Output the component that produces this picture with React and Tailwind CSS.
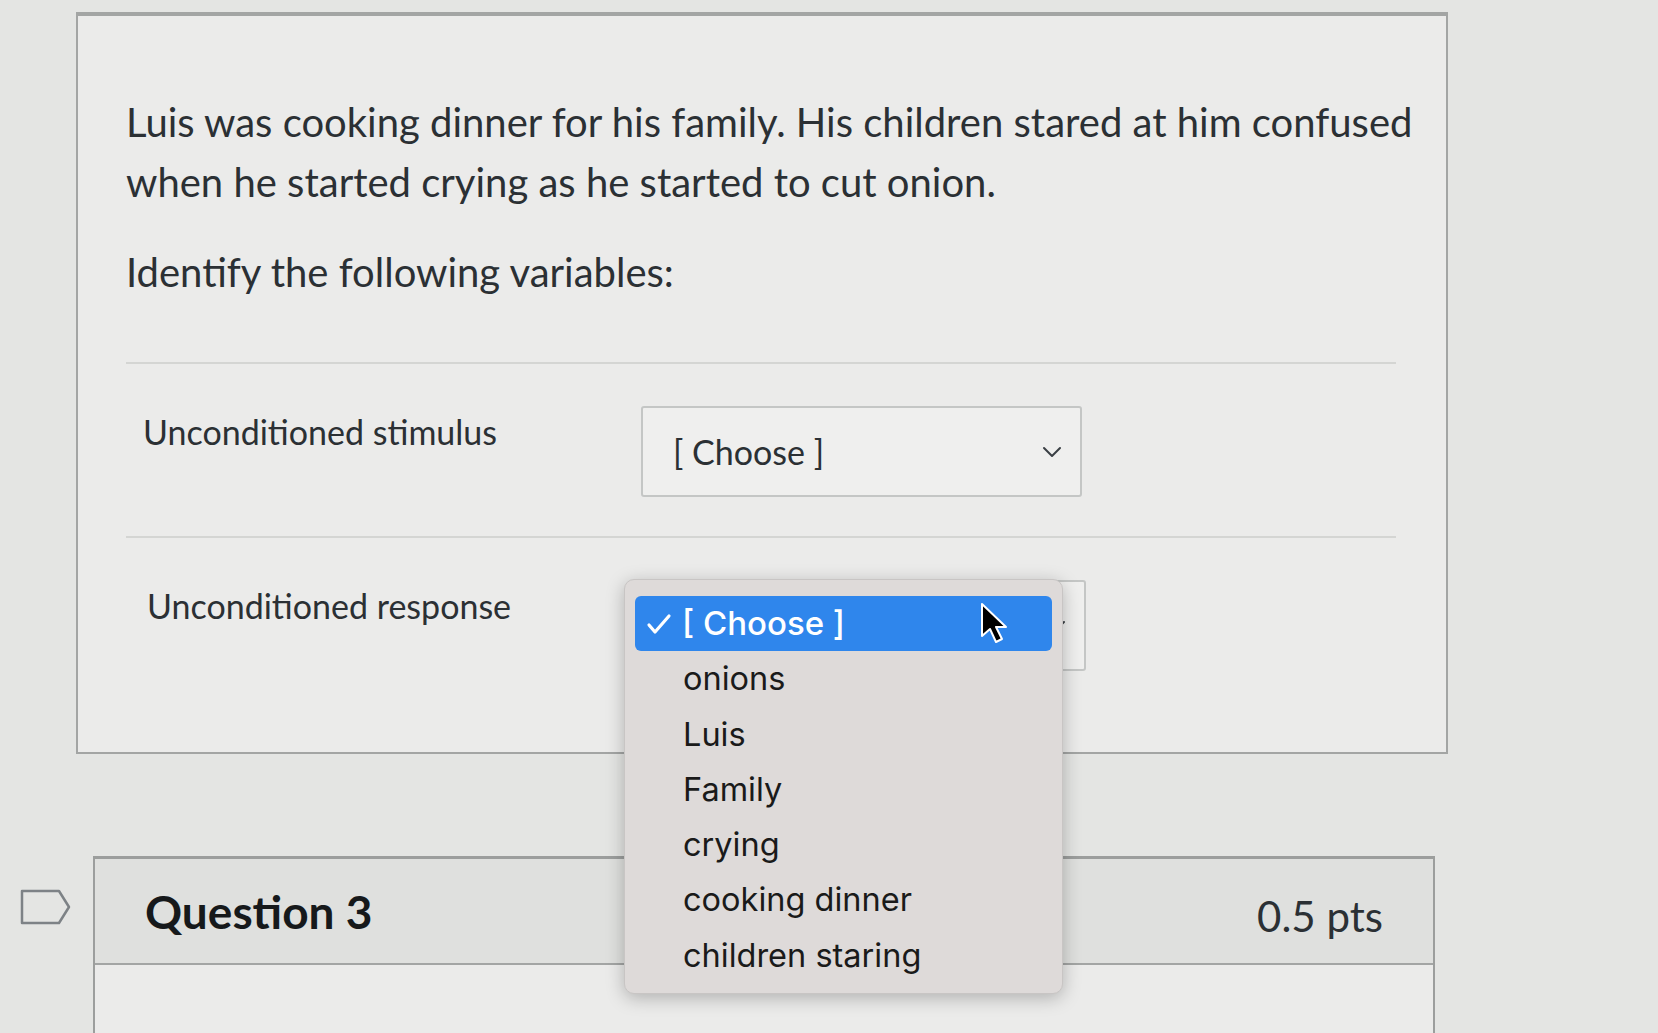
import React from 'react';

const options = ['onions', 'Luis', 'Family', 'crying', 'cooking dinner', 'children staring'];

const Chevron = () => (
  <svg width="20" height="12" viewBox="0 0 20 12" fill="none" stroke="#3a3f44" strokeWidth="2" strokeLinecap="round" strokeLinejoin="round">
    <path d="M2 2l8 8 8-8" />
  </svg>
);

const SelectBox = ({ children }) => (
  <div className="flex items-center justify-between w-[441px] h-[91px] border-2 border-[#c4c6c5] rounded-[3px] bg-[#efefee] pl-[30px] pr-[18px]">
    <span className="text-[34px] text-[#2b3034]">{children}</span>
    <Chevron />
  </div>
);

const Row = ({ label, children }) => (
  <div className="flex items-start pt-[42px] pb-[39px]">
    <div className="w-[498px] pt-[6px] text-[34px] leading-[40px] text-[#2b3034]">{label}</div>
    {children}
  </div>
);

const Dropdown = () => (
  <div className="absolute left-[624px] top-[579px] w-[439px] h-[415px] rounded-[10px] bg-[#dedad9] shadow-[0_4px_18px_rgba(0,0,0,0.25)] border border-[#c8c5c4] px-[10px] pt-[16px] font-['Inter',sans-serif]">
    <div className="relative flex items-center h-[55px] rounded-[6px] bg-[#2f86ec] text-white pl-[11px]">
      <svg width="26" height="22" viewBox="0 0 26 22" fill="none" stroke="white" strokeWidth="3.2" strokeLinecap="round" strokeLinejoin="round">
        <path d="M3 12l6 7L23 3" />
      </svg>
      <span className="ml-[10px] text-[33px] font-medium leading-none">[ Choose ]</span>
      <svg className="absolute left-[344px] top-[6px]" width="28" height="44" viewBox="0 0 28 44">
        <path d="M3 2v32l8-7 6 13 6-3-6-12h10z" fill="black" stroke="white" strokeWidth="2" strokeLinejoin="round" />
      </svg>
    </div>
    <div className="flex flex-col pl-[48px] pt-[1px]">
      {options.map((o) => (
        <div key={o} className="h-[55.3px] flex items-center text-[32.5px] text-[#1a1a1a]">
          {o}
        </div>
      ))}
    </div>
  </div>
);

const App = () => {
  return (
    <div className="relative w-[1658px] h-[1033px] overflow-hidden bg-[#e4e5e3] font-['Lato',sans-serif] text-[#2b3034]">
      <div className="ml-[76px] mt-[12px] w-[1372px] h-[742px] border-2 border-t-[4px] border-[#a3a5a4] bg-[#ebebea] pt-[76px] pl-[48px] pr-[30px]">
        <p className="w-[1295px] text-[40px] leading-[60px]">
          Luis was cooking dinner for his family. His children stared at him confused when he started crying as he started to cut onion.
        </p>
        <p className="mt-[30px] text-[40px] leading-[60px]">Identify the following variables:</p>
        <div className="mt-[60px] mr-[20px] border-t-2 border-[#d4d5d3]" />
        <div className="pl-[17px]">
          <Row label="Unconditioned stimulus">
            <SelectBox>[ Choose ]</SelectBox>
          </Row>
        </div>
        <div className="mr-[20px] border-t-2 border-[#d4d5d3]" />
        <div className="pl-[21px]">
          <Row label="Unconditioned response">
            <SelectBox />
          </Row>
        </div>
      </div>

      <div className="flex items-start mt-[102px]">
        <div className="w-[93px] pl-[20px] pt-[32px]">
          <svg width="52" height="38" viewBox="0 0 52 38" fill="none" stroke="#7d8286" strokeWidth="2.5" strokeLinejoin="round">
            <path d="M2 3h37l10 16-10 16H2z" />
          </svg>
        </div>
        <div className="w-[1342px] border-2 border-t-[3px] border-[#9c9e9d]">
          <div className="flex items-center justify-between h-[106px] bg-[#dfe0de] border-b-2 border-[#a3a5a4] pl-[50px] pr-[50px]">
            <span className="text-[46px] font-bold text-[#16191b]">Question 3</span>
            <span className="text-[42px] text-[#2b3034] mt-[10px]">0.5 pts</span>
          </div>
          <div className="h-[100px] bg-[#ebebea]" />
        </div>
      </div>

      <Dropdown />
    </div>
  );
};

export default App;
